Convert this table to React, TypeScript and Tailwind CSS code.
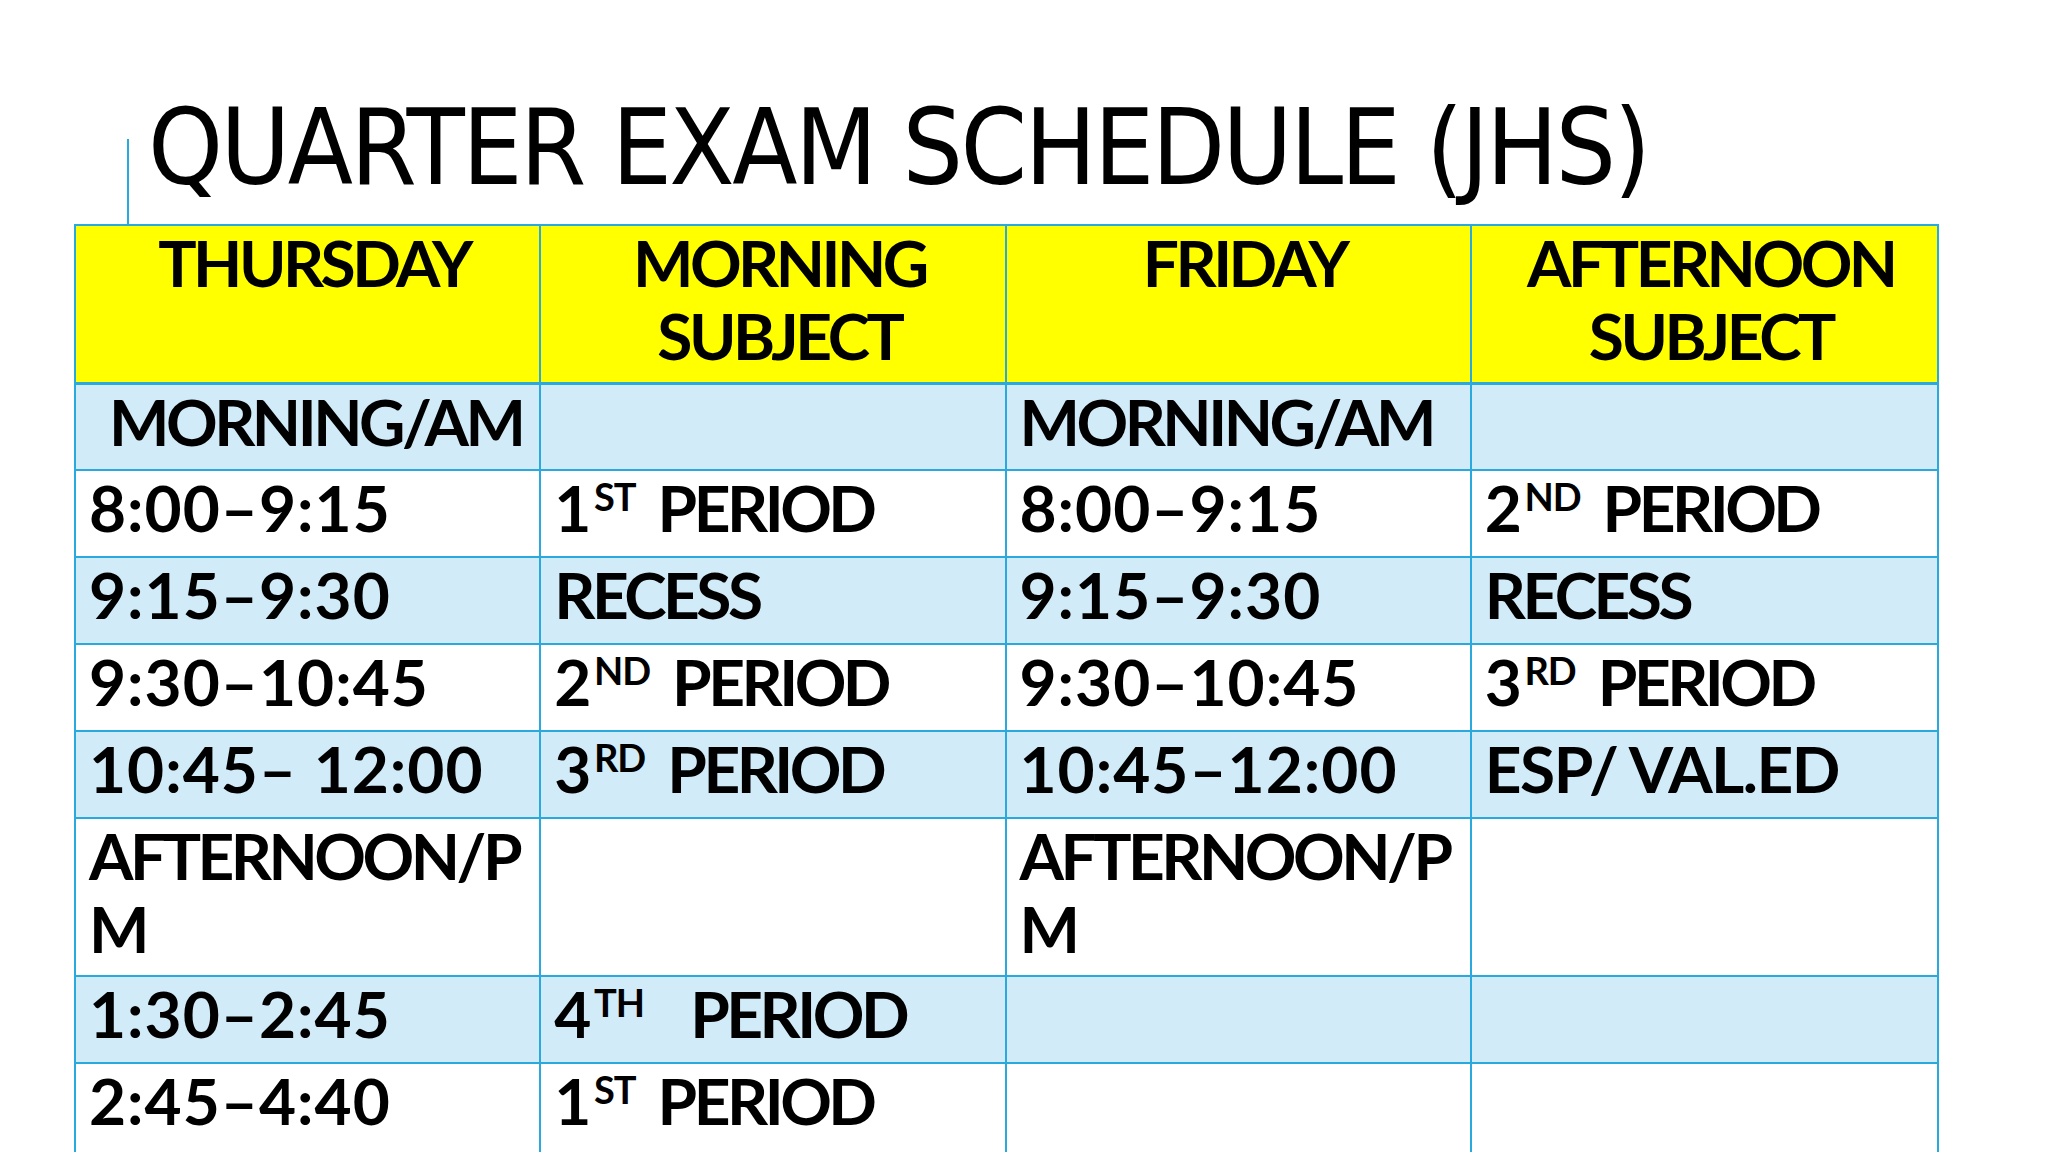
const cell = "pl-[13px] leading-[73px] border-r-2 border-[#2aa9df] last:border-r-0";
const word = "tracking-[-3.5px]";
const time = "tracking-[1px]";

type Row = {
  cells: React.ReactNode[];
  blue?: boolean;
  h: string;
};

function Ord({ n, suf }: { n: string; suf: string }) {
  return (
    <>
      {n}
      <span className="relative -top-[21px] ml-[6px] mr-[10px] text-[38px] tracking-[-1px]">{suf}</span>
    </>
  );
}

const T = ({ t }: { t: string }) => <span className={time}>{t}</span>;
const W = ({ children }: { children: React.ReactNode }) => <span className={word}>{children}</span>;

const rows: Row[] = [
  {
    blue: true,
    h: "h-[86px]",
    cells: [
      <span className={"pl-[20px] " + word}>MORNING/AM</span>,
      "",
      <W>MORNING/AM</W>,
      "",
    ],
  },
  {
    h: "h-[87px]",
    cells: [
      <T t="8:00–9:15" />,
      <W>
        <Ord n="1" suf="ST" /> PERIOD
      </W>,
      <T t="8:00–9:15" />,
      <W>
        <Ord n="2" suf="ND" /> PERIOD
      </W>,
    ],
  },
  {
    blue: true,
    h: "h-[87px]",
    cells: [<T t="9:15–9:30" />, <W>RECESS</W>, <T t="9:15–9:30" />, <W>RECESS</W>],
  },
  {
    h: "h-[87px]",
    cells: [
      <T t="9:30–10:45" />,
      <W>
        <Ord n="2" suf="ND" /> PERIOD
      </W>,
      <T t="9:30–10:45" />,
      <W>
        <Ord n="3" suf="RD" /> PERIOD
      </W>,
    ],
  },
  {
    blue: true,
    h: "h-[87px]",
    cells: [
      <T t="10:45– 12:00" />,
      <W>
        <Ord n="3" suf="RD" /> PERIOD
      </W>,
      <T t="10:45–12:00" />,
      <span className="tracking-[-1.5px]">ESP/ VAL.ED</span>,
    ],
  },
  {
    h: "h-[158px]",
    cells: [
      <W>
        AFTERNOON/P
        <br />M
      </W>,
      "",
      <W>
        AFTERNOON/P
        <br />M
      </W>,
      "",
    ],
  },
  {
    blue: true,
    h: "h-[87px]",
    cells: [
      <T t="1:30–2:45" />,
      <W>
        <Ord n="4" suf="TH" />
        {"\u00a0\u00a0\u00a0"}PERIOD
      </W>,
      "",
      "",
    ],
  },
  {
    h: "h-[200px]",
    cells: [
      <T t="2:45–4:40" />,
      <>
        <W>
          <Ord n="1" suf="ST" /> PERIOD
        </W>
        <div className="-mt-[2px] text-[33px] leading-[40px] tracking-[-1px]">(AFTERNOON SUBJECT)</div>
      </>,
      "",
      "",
    ],
  },
];

export default function App() {
  return (
    <div className="w-[2048px] h-[1152px] overflow-hidden bg-white text-black">
      {/* title */}
      <div className="flex h-[224px] pl-[127px]">
        <div className="self-end w-[2px] h-[85px] bg-[#2aa9df]" />
        <h1
          className="ml-[19px] mt-[95px] text-[106px] leading-[106px] tracking-[-2.5px] whitespace-nowrap"
          style={{ fontFamily: '"Liberation Sans Narrow", "DejaVu Sans Condensed", sans-serif' }}
        >
          QUARTER EXAM SCHEDULE (JHS)
        </h1>
      </div>

      {/* table */}
      <div
        className="ml-[74px] w-[1865px] border-2 border-[#2aa9df] font-bold text-[64px]"
        style={{ fontFamily: 'Lato, "Open Sans", sans-serif' }}
      >
        <div className={"grid grid-cols-4 h-[159px] bg-[#ffff00] border-b-[3px] border-[#2aa9df] text-center " + word}>
          <div className={cell + " pl-0"}>THURSDAY</div>
          <div className={cell + " pl-0"}>
            MORNING
            <br />
            SUBJECT
          </div>
          <div className={cell + " pl-0"}>FRIDAY</div>
          <div className={cell + " pl-0"}>
            AFTERNOON
            <br />
            SUBJECT
          </div>
        </div>

        {rows.map((r, i) => (
          <div
            key={i}
            className={
              "grid grid-cols-4 border-b-2 border-[#2aa9df] " +
              r.h +
              (r.blue ? " bg-[#d1ebf8]" : " bg-white")
            }
          >
            {r.cells.map((c, j) => (
              <div key={j} className={cell + " whitespace-nowrap"}>
                {c}
              </div>
            ))}
          </div>
        ))}
      </div>
    </div>
  );
}
